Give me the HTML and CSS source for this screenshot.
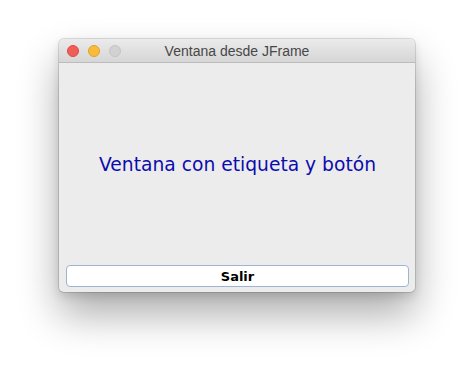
FILE: index.html
```html
<!DOCTYPE html>
<html>
<head>
    <meta http-equiv="Content-Type" content="text/html; charset=utf-8" />
    <title>Ventana desde JFrame</title>
    <link rel="stylesheet" href="styles.css">
</head>
<body>

<div class="window">
    <!--barra de titulo-->
    <div class="titlebar">
        <div class="lights">
            <span class="light red"></span>
            <span class="light yellow"></span>
            <span class="light gray"></span>
        </div>
        <div class="title">Ventana desde JFrame</div>
    </div>
    <!--contenido-->
    <div class="content">
        <div class="label">Ventana con etiqueta y botón</div>
        <button class="btn">Salir</button>
    </div>
</div>
</body>
</html>
```

FILE: styles.css
```css
html {
    background-color:#ffffff;
}
body {
    margin:0;
    padding:39px 0 0 59px;
    min-height:369px;
    box-sizing:border-box;
}
.window {
    box-sizing:border-box;
    width:356px;
    height:253px;
    display:flex;
    flex-direction:column;
    background:#ececec;
    border-radius:5px;
    overflow:hidden;
    box-shadow:0 0 0 1px rgba(0,0,0,0.12), 0 22px 40px rgba(0,0,0,0.33), 0 4px 10px rgba(0,0,0,0.12);
}
.titlebar {
    position:relative;
    flex:none;
    display:flex;
    align-items:center;
    justify-content:center;
    background:linear-gradient(#ebebeb, #d6d6d6);
    border-bottom:1px solid #bcbcbc;
    box-sizing:border-box;
    height:24px;
}
.lights {
    position:absolute;
    left:8px;
    top:6px;
    display:flex;
    gap:9px;
}
.light {
    width:12px;
    height:12px;
    border-radius:50%;
    box-sizing:border-box;
}
.red {
    background:#f05f57;
    border:1px solid #de4a42;
}
.yellow {
    background:#f8bc3a;
    border:1px solid #dea32c;
}
.gray {
    background:#d2d2d2;
    border:1px solid #c4c4c4;
}
.title {
    font-family:"Liberation Sans", Arial, sans-serif;
    font-size:14px;
    color:#474747;
}
.content {
    flex:1;
    display:flex;
    flex-direction:column;
    padding:0 6px 5px 7px;
}
.label {
    flex:1;
    display:flex;
    align-items:center;
    justify-content:center;
    font-family:"DejaVu Sans", Verdana, sans-serif;
    font-size:18.7px;
    color:#0c0cae;
}
.btn {
    height:22px;
    background:#ffffff;
    border:1px solid #9fb3d3;
    border-radius:4px;
    font-family:"DejaVu Sans", Verdana, sans-serif;
    font-weight:bold;
    font-size:13px;
    color:#000000;
    padding:0;
}
```
